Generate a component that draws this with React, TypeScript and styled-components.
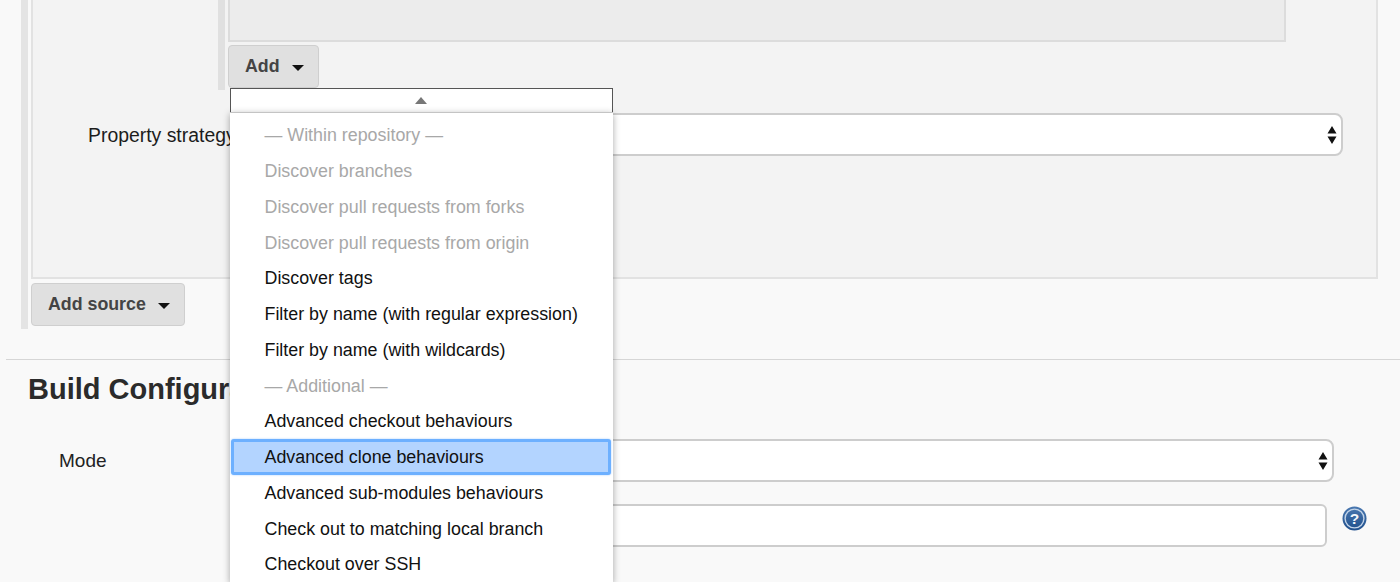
import React from "react";
import styled, { createGlobalStyle } from "styled-components";

const GlobalStyle = createGlobalStyle`
  html, body {
    margin: 0;
    padding: 0;
    background: #f9f9f9;
    font-family: "Liberation Sans", Arial, sans-serif;
    color: #111;
  }
`;

const menuItems = [
  { label: "— Within repository —", muted: true },
  { label: "Discover branches", muted: true },
  { label: "Discover pull requests from forks", muted: true },
  { label: "Discover pull requests from origin", muted: true },
  { label: "Discover tags" },
  { label: "Filter by name (with regular expression)" },
  { label: "Filter by name (with wildcards)" },
  { label: "— Additional —", muted: true },
  { label: "Advanced checkout behaviours" },
  { label: "Advanced clone behaviours", active: true },
  { label: "Advanced sub-modules behaviours" },
  { label: "Check out to matching local branch" },
  { label: "Checkout over SSH" },
];

const SelectArrows = () => (
  <svg width="10" height="18" viewBox="0 0 10 18">
    <path d="M5 0 L9.5 7.5 H0.5 Z M5 18 L0.5 10.5 H9.5 Z" fill="#111" />
  </svg>
);

const HelpIcon = () => (
  <HelpSvg width="25" height="25" viewBox="0 0 25 25">
    <defs>
      <linearGradient id="help" x1="0" y1="0" x2="0" y2="1">
        <stop offset="0" stopColor="#4a78b0" />
        <stop offset="1" stopColor="#1f4f8c" />
      </linearGradient>
    </defs>
    <circle cx="12.5" cy="12.5" r="12" fill="url(#help)" />
    <circle cx="12.5" cy="12.5" r="9.4" fill="none" stroke="#c3d4e8" strokeWidth="1.4" />
    <text x="12.5" y="18" textAnchor="middle" fontSize="15.5" fontWeight="700" fontFamily="Liberation Sans, sans-serif" fill="#f2f6fa">
      ?
    </text>
  </HelpSvg>
);

export default function App() {
  return (
    <Page>
      <GlobalStyle />
      <Sources>
        <SourcePanel>
          <Behaviours>
            <BehaviourList />
            <DropButton>
              Add <Caret />
            </DropButton>
          </Behaviours>
          <StrategyRow>
            <StrategyLabel>Property strategy</StrategyLabel>
            <SelectBox>
              <SelectArrows />
            </SelectBox>
          </StrategyRow>
        </SourcePanel>
        <AddSourceButton>
          Add source <Caret />
        </AddSourceButton>
      </Sources>

      <Section>
        <Heading>Build Configuration</Heading>
        <ModeRow>
          <ModeLabel>Mode</ModeLabel>
          <ModeSelect>
            <SelectArrows />
          </ModeSelect>
        </ModeRow>
        <ScriptRow>
          <ScriptInput />
          <HelpIcon />
        </ScriptRow>
      </Section>

      <Dropdown>
        <ScrollUp>
          <ScrollArrow />
        </ScrollUp>
        <Menu>
          {menuItems.map((item) => (
            <MenuItem key={item.label} $muted={item.muted} $active={item.active}>
              {item.label}
            </MenuItem>
          ))}
        </Menu>
      </Dropdown>
    </Page>
  );
}

const Page = styled.div`
  position: relative;
  width: 1400px;
  height: 582px;
  overflow: hidden;
  background: #f9f9f9;
`;

const Sources = styled.div`
  width: 1357px;
  height: 329px;
  margin-left: 21px;
  padding-left: 3px;
  border-left: 7px solid #e4e4e4;
  box-sizing: border-box;
`;

const SourcePanel = styled.div`
  width: 1347px;
  height: 279px;
  box-sizing: border-box;
  border: 2px solid #e2e2e2;
  border-top: 0;
  background: #f3f3f3;
`;

const Behaviours = styled.div`
  width: 1068px;
  height: 90px;
  margin-left: 185px;
  padding-left: 3px;
  border-left: 7px solid #e0e0e0;
`;

const BehaviourList = styled.div`
  width: 1058px;
  height: 42px;
  box-sizing: border-box;
  border: 2px solid #dcdcdc;
  border-top: 0;
  background: #ececec;
`;

const DropButton = styled.div`
  display: inline-flex;
  align-items: center;
  justify-content: space-between;
  width: 91px;
  height: 43px;
  margin-top: 3px;
  padding: 0 14px 1px 16px;
  box-sizing: border-box;
  border: 1px solid #cfcfcf;
  border-radius: 4px;
  background: #e0e0e0;
  color: #444;
  font-size: 17.8px;
  font-weight: 700;
`;

const AddSourceButton = styled(DropButton)`
  width: 154px;
  margin-top: 4px;
`;

const Caret = styled.span`
  width: 0;
  height: 0;
  margin-top: 3px;
  border-left: 6px solid transparent;
  border-right: 6px solid transparent;
  border-top: 6px solid #111;
`;

const StrategyRow = styled.div`
  display: flex;
  align-items: center;
  margin-top: 23px;
`;

const StrategyLabel = styled.div`
  width: 152px;
  margin-left: 55px;
  padding-top: 1px;
  white-space: nowrap;
  font-size: 19.4px;
  color: #1c1c1c;
`;

const SelectBox = styled.div`
  display: flex;
  align-items: center;
  justify-content: flex-end;
  width: 1103px;
  height: 43px;
  padding-right: 4px;
  box-sizing: border-box;
  border: 2px solid #cdcdcd;
  border-radius: 8px;
  background: #fff;
`;

const Section = styled.section`
  margin-top: 30px;
  margin-left: 6px;
  border-top: 1px solid #d6d6d6;
`;

const Heading = styled.h2`
  margin: 12px 0 0 22px;
  font-size: 29px;
  line-height: 34px;
  font-weight: 700;
  color: #2b2b2b;
  white-space: nowrap;
`;

const ModeRow = styled.div`
  display: flex;
  align-items: center;
  margin-top: 33px;
`;

const ModeLabel = styled.div`
  width: 181px;
  margin-left: 53px;
  font-size: 19px;
  color: #222;
  padding-top: 1px;
`;

const ModeSelect = styled(SelectBox)`
  width: 1094px;
`;

const ScriptRow = styled.div`
  display: flex;
  align-items: flex-start;
  gap: 15px;
  margin-top: 22px;
  margin-left: 234px;
`;

const ScriptInput = styled.div`
  width: 1087px;
  height: 43px;
  box-sizing: border-box;
  border: 2px solid #cdcdcd;
  border-radius: 6px;
  background: #fff;
`;

const HelpSvg = styled.svg`
  margin-top: 2px;
`;

const Dropdown = styled.div`
  position: absolute;
  top: 88px;
  left: 230px;
  width: 383px;
`;

const ScrollUp = styled.div`
  display: flex;
  align-items: center;
  justify-content: center;
  height: 24px;
  box-sizing: border-box;
  border: 1px solid #555;
  border-bottom: 0;
  background: #fff;
`;

const ScrollArrow = styled.span`
  width: 0;
  height: 0;
  margin-right: 1px;
  border-left: 6.5px solid transparent;
  border-right: 6.5px solid transparent;
  border-top: 0;
  border-bottom: 7px solid #777;
`;

const Menu = styled.div`
  padding: 4px 2px 0 1px;
  border-top: 1px solid #c4c4c4;
  background: #fff;
  box-shadow: 0 2px 7px rgba(0, 0, 0, 0.35);
`;

const MenuItem = styled.div<{ $muted?: boolean; $active?: boolean }>`
  display: flex;
  align-items: center;
  height: 35.75px;
  padding-top: 2px;
  padding-left: ${(p) => (p.$active ? "30.5px" : "33.5px")};
  box-sizing: border-box;
  font-size: 17.85px;
  white-space: nowrap;
  color: ${(p) => (p.$muted ? "#a8a8a8" : "#111")};
  ${(p) =>
    p.$active &&
    `
    background: #b3d4ff;
    border: 3px solid #6db0ff;
    border-radius: 3px;
    box-shadow: 0 0 2px #9cc8ff;
  `}
`;
